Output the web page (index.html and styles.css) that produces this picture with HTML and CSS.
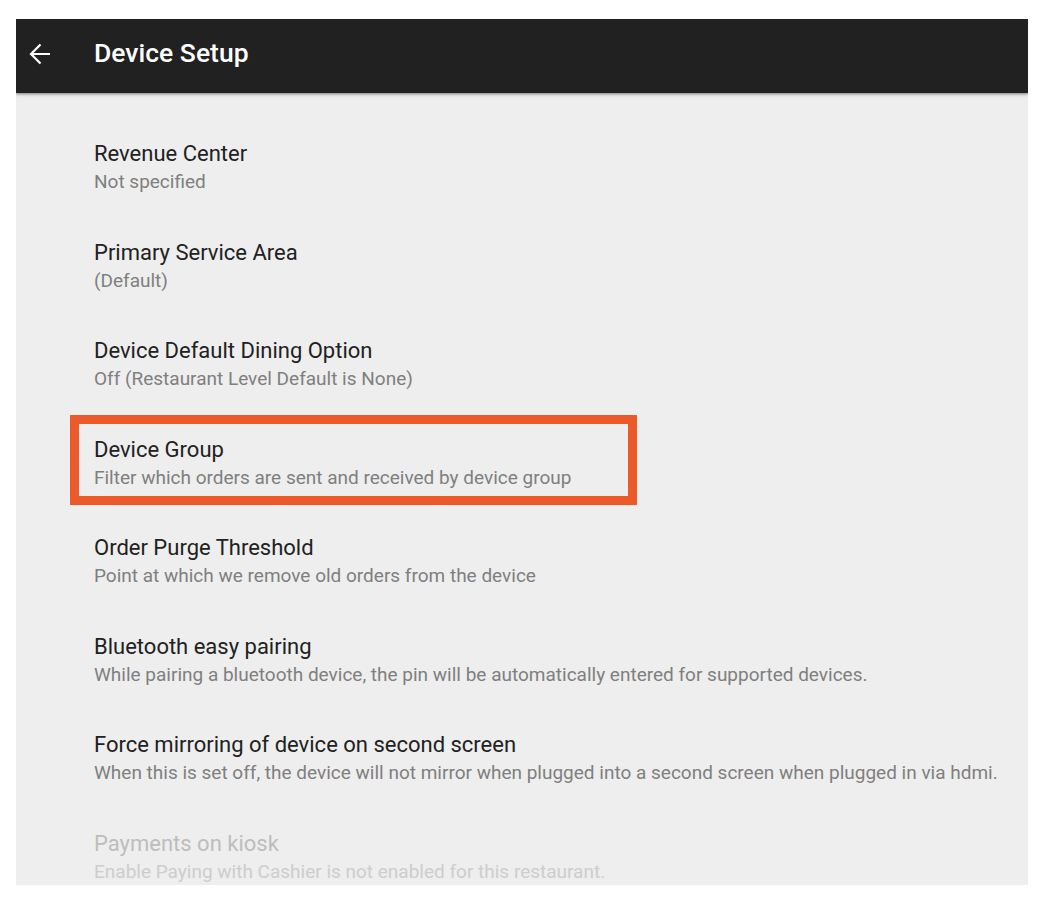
FILE: index.html
```html
<!DOCTYPE html>
<html lang="en">
<head>
<meta charset="utf-8">
<title>Device Setup</title>
<link rel="stylesheet" href="styles.css">
</head>
<body>
<div class="screen">
  <header class="appbar">
    <button class="back" aria-label="Back">
      <svg width="24" height="24" viewBox="0 0 24 24"><path d="M22 12H3.5M12.5 2.5L3 12l9.5 9.5" fill="none" stroke="#fff" stroke-width="2.2"/></svg>
    </button>
    <h1 class="title">Device Setup</h1>
  </header>
  <div class="list">
    <div class="item">
      <div class="item-title">Revenue Center</div>
      <div class="item-sub">Not specified</div>
    </div>
    <div class="item">
      <div class="item-title">Primary Service Area</div>
      <div class="item-sub">(Default)</div>
    </div>
    <div class="item">
      <div class="item-title">Device Default Dining Option</div>
      <div class="item-sub">Off (Restaurant Level Default is None)</div>
    </div>
    <div class="item highlighted">
      <div class="item-title">Device Group</div>
      <div class="item-sub">Filter which orders are sent and received by device group</div>
      <span class="highlight-box"></span>
    </div>
    <div class="item">
      <div class="item-title">Order Purge Threshold</div>
      <div class="item-sub">Point at which we remove old orders from the device</div>
    </div>
    <div class="item">
      <div class="item-title">Bluetooth easy pairing</div>
      <div class="item-sub">While pairing a bluetooth device, the pin will be automatically entered for supported devices.</div>
    </div>
    <div class="item">
      <div class="item-title">Force mirroring of device on second screen</div>
      <div class="item-sub">When this is set off, the device will not mirror when plugged into a second screen when plugged in via hdmi.</div>
    </div>
    <div class="item disabled">
      <div class="item-title">Payments on kiosk</div>
      <div class="item-sub">Enable Paying with Cashier is not enabled for this restaurant.</div>
    </div>
  </div>
</div>
</body>
</html>
```
FILE: styles.css
```css
html, body {
  margin: 0;
  padding: 0;
  background: #ffffff;
}
body {
  font-family: Roboto, "Noto Sans", sans-serif;
}
.screen {
  margin: 19px 0 0 16px;
  width: 1012px;
  height: 866px;
  background: #eeeeee;
  overflow: hidden;
  position: relative;
}
.appbar {
  height: 74px;
  background: #212121;
  display: flex;
  align-items: center;
  position: relative;
  box-shadow: 0 1px 2px rgba(0,0,0,0.35), 0 2px 4px rgba(0,0,0,0.15);
  z-index: 1;
}
.back {
  border: 0;
  background: transparent;
  padding: 0;
  margin-left: 12px;
  width: 24px;
  height: 24px;
  display: flex;
  align-items: center;
  justify-content: center;
  position: relative;
  top: -2px;
}
.title {
  margin: 0 0 0 42px;
  color: #ffffff;
  font-size: 26.5px;
  font-weight: 500;
  letter-spacing: 0;
  line-height: 1;
  position: relative;
  top: -3px;
}
.list {
  padding-top: 22px;
}
.item {
  position: relative;
  height: 98.57px;
  box-sizing: border-box;
  padding: 25px 0 0 78px;
}
.item-title {
  font-size: 22px;
  line-height: 28px;
  color: #212121;
}
.item-sub {
  font-size: 19px;
  line-height: 28px;
  color: #7f7f7f;
}
.item.disabled .item-title {
  color: #bdbdbd;
}
.item.disabled .item-sub {
  color: #cdcdcd;
}
.highlight-box {
  position: absolute;
  left: 54px;
  top: 4px;
  width: 567px;
  height: 90px;
  box-sizing: border-box;
  border: 9px solid #ec5a2a;
  pointer-events: none;
}
```
